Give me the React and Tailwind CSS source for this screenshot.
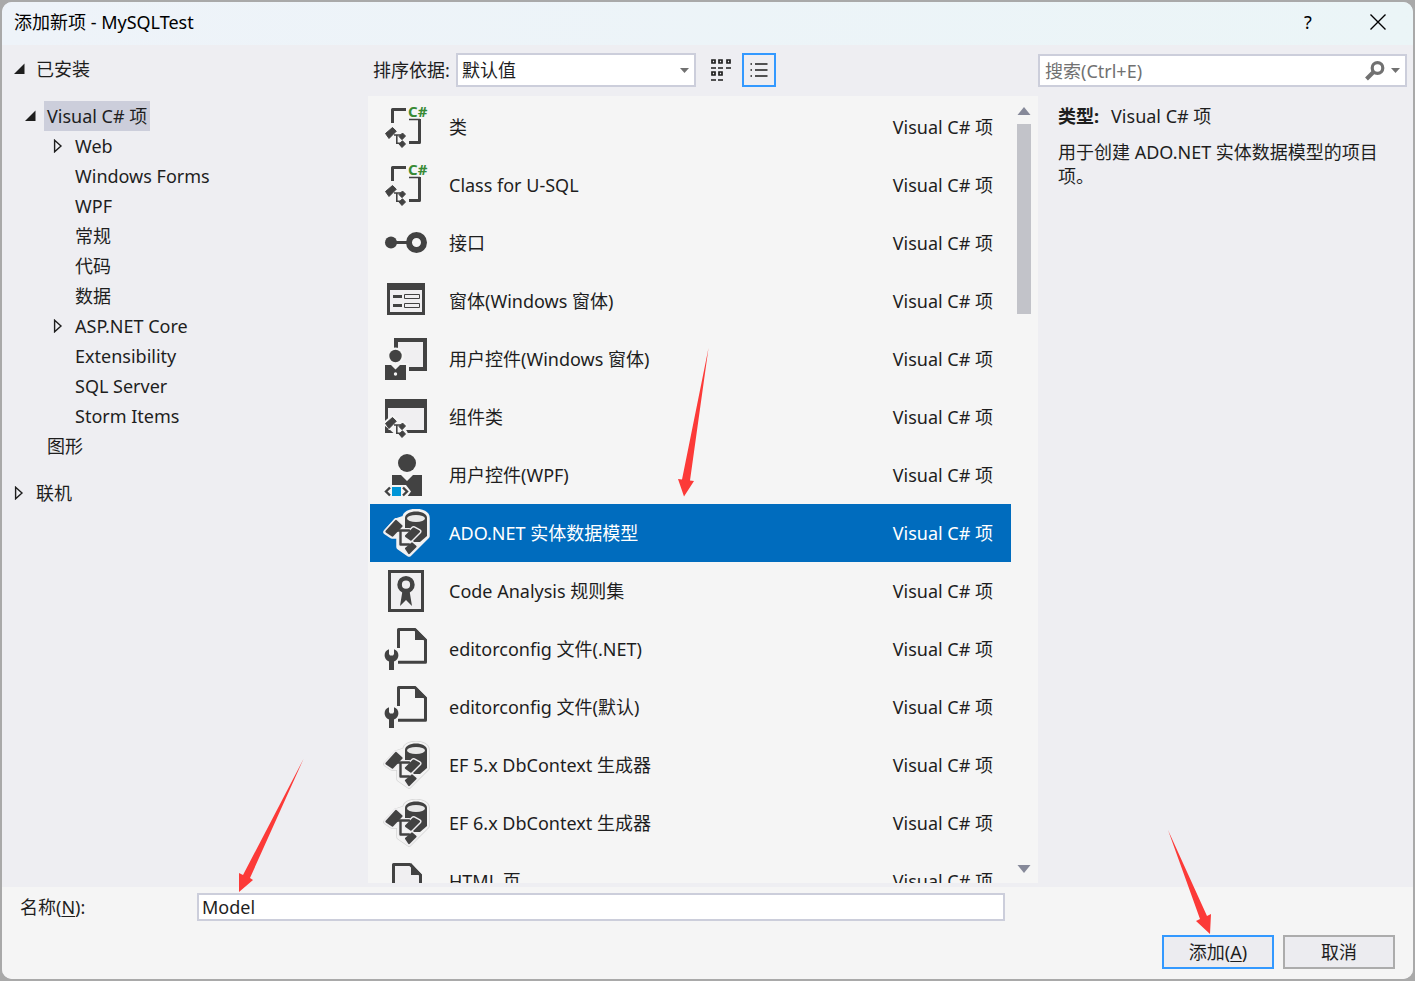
import React, { useState } from 'react';

const DARK = '#424242';
const LIGHT = '#f5f5f5';

const TREE = [
  { name: 'Visual C# 项', level: 1, arrow: 'open' },
  { name: 'Web', level: 2, arrow: 'closed' },
  { name: 'Windows Forms', level: 2 },
  { name: 'WPF', level: 2 },
  { name: '常规', level: 2 },
  { name: '代码', level: 2 },
  { name: '数据', level: 2 },
  { name: 'ASP.NET Core', level: 2, arrow: 'closed' },
  { name: 'Extensibility', level: 2 },
  { name: 'SQL Server', level: 2 },
  { name: 'Storm Items', level: 2 },
  { name: '图形', level: 1 }
];

const TEMPLATES = [
  { name: '类', icon: 'class' },
  { name: 'Class for U-SQL', icon: 'class' },
  { name: '接口', icon: 'interface' },
  { name: '窗体(Windows 窗体)', icon: 'form' },
  { name: '用户控件(Windows 窗体)', icon: 'userControl' },
  { name: '组件类', icon: 'component' },
  { name: '用户控件(WPF)', icon: 'wpf' },
  { name: 'ADO.NET 实体数据模型', icon: 'entity' },
  { name: 'Code Analysis 规则集', icon: 'ruleset' },
  { name: 'editorconfig 文件(.NET)', icon: 'config' },
  { name: 'editorconfig 文件(默认)', icon: 'config' },
  { name: 'EF 5.x DbContext 生成器', icon: 'entity' },
  { name: 'EF 6.x DbContext 生成器', icon: 'entity' },
  { name: 'HTML 页', icon: 'page' }
];

/* Iconos de las plantillas */

const Nodes = () => (
  <>
    <path
      d="M3.5 30.5 10.5 24.5 14.3 28.2 7 35.5ZM17 33.5 20.5 30 23.5 33 20 36.7ZM17 41 20.5 37.8 23.5 41 20 44.5Z"
      fill={DARK}
      stroke={DARK}
      strokeLinejoin="round"
    />
    <path d="M12 32H19M14.8 32V40.2H18" fill="none" stroke={DARK} strokeWidth="1.6" />
  </>
);

const ClassIcon = () => (
  <>
    <path d="M10.5 20V6.5H24M37.5 16V39.5H27" fill="none" stroke={DARK} strokeWidth="3" strokeLinejoin="round" />
    <path d="M27 16.5H38" stroke={DARK} strokeWidth="1.5" />
    <text x="26" y="13.5" fontSize="15" fontWeight="700" fill="#388a34">C#</text>
    <Nodes />
  </>
);

const InterfaceIcon = () => (
  <>
    <circle cx="9" cy="23.5" r="6" fill={DARK} />
    <path d="M14 23.5H25" stroke={DARK} strokeWidth="3" />
    <circle cx="34.5" cy="23.5" r="7.5" fill="none" stroke={DARK} strokeWidth="6" />
  </>
);

const FormIcon = () => (
  <>
    <path d="M5 6H43V38H5Z" fill={DARK} />
    <path d="M8 13H40V35H8Z" fill="#f0eff1" />
    <path d="M11 18H20V21H11ZM11 27H20V30H11Z" fill={DARK} />
    <path d="M22.5 17.5H37.5V21.5H22.5ZM22.5 26.5H37.5V30.5H22.5Z" fill="none" stroke={DARK} />
  </>
);

const UserControlIcon = () => (
  <>
    <path d="M14 5H43V34H14Z" fill="#f0eff1" stroke={DARK} strokeWidth="4" />
    <circle cx="13.5" cy="21" r="8.5" fill={LIGHT} />
    <path d="M1 28H27V46H1Z" fill={LIGHT} />
    <circle cx="13.5" cy="21" r="6.2" fill={DARK} />
    <path d="M3 30H9L13.5 34.5 18 30H24V45H3Z" fill={DARK} />
    <circle cx="13.5" cy="39" r="1.7" fill={LIGHT} />
  </>
);

const ComponentIcon = () => (
  <>
    <path d="M3 6H45V40H3Z" fill={DARK} />
    <path d="M6 15H42V37H6Z" fill="#f0eff1" />
    <path
      d="M3 30.5 10.5 24 14.5 28 20.5 29.5 24 33 22 37 24 41 20 45 14.5 40 10 36Z"
      fill={LIGHT}
      stroke={LIGHT}
      strokeWidth="4"
      strokeLinejoin="round"
    />
    <path d="M3 36V40H10L6 36Z" fill={DARK} />
    <Nodes />
  </>
);

const WpfIcon = () => (
  <>
    <circle cx="25" cy="12" r="9" fill={DARK} />
    <path d="M10 24H19L25 30 31 24H40V45H10Z" fill={DARK} />
    <path d="M8 34H24L29 40.5 25 46H8Z" fill={LIGHT} />
    <path d="M10 36H19V45H10Z" fill="#0095d7" />
    <path d="M8 36.5 4 40.5 8 44.5M21 36.5 25 40.5 21 44.5" fill="none" stroke={DARK} strokeWidth="2.4" />
  </>
);

const ENTITY_NODES = 'M4.5 22.5 14 12 19.5 17 10.5 26.5ZM24 27 31.5 19.5 37 22.5 29 30.5ZM24 39.5 30 34.5 33.5 37.5 27 44Z';
const ENTITY_LINKS = 'M14 21.5H27M18.5 21.5V35.5H27';
const ENTITY_DRUM = 'M23 9C23 5 28 2.5 34 2.5S45 5 45 9V27L38 33H30L23 20Z';
const ENTITY_BACK = 'M4 23 14 12 23 9 36 4 45 27 27 45 17 38V27H10Z';

const EntityIcon = ({ selected }) => (
  <g strokeLinejoin="round" strokeLinecap="round">
    <path
      d={ENTITY_DRUM + ENTITY_NODES + ENTITY_BACK}
      fill={selected ? '#f0eff1' : '#d6d6d6'}
      stroke={selected ? '#f0eff1' : '#d6d6d6'}
      strokeWidth="5.5"
    />
    <path d={ENTITY_DRUM + ENTITY_NODES + ENTITY_BACK} fill="#f3f3f3" stroke="#f3f3f3" strokeWidth="4" />
    <path d={ENTITY_DRUM} fill={DARK} />
    <ellipse cx="34" cy="9.5" rx="9" ry="3.4" fill="#e8e8e8" />
    <path d={ENTITY_NODES} fill="#f0eff1" stroke="#f0eff1" strokeWidth="5" />
    <path d={ENTITY_LINKS} fill="none" stroke="#f0eff1" strokeWidth="5" />
    <path d={ENTITY_NODES} fill={DARK} stroke={DARK} strokeWidth="2.2" />
    <path d={ENTITY_LINKS} fill="none" stroke={DARK} strokeWidth="2.4" />
  </g>
);

const RulesetIcon = () => (
  <>
    <path d="M7.5 4.5H40.5V43.5H7.5Z" fill="#f0eff1" stroke={DARK} strokeWidth="3" />
    <path d="M20.3 25H27.7L30 39 24 33 18 39Z" fill={DARK} />
    <circle cx="24" cy="17.7" r="6.4" fill="#f0eff1" stroke={DARK} strokeWidth="4.6" />
  </>
);

const ConfigIcon = () => (
  <>
    <path d="M16.5 23V4.5H33L43.5 15V37.2H16" fill="none" stroke={DARK} strokeWidth="3" strokeLinejoin="round" />
    <path d="M33 3V15H45Z" fill={DARK} />
    <circle cx="9.5" cy="30.5" r="8.5" fill={LIGHT} />
    <path d="M7 24.2V29L8 30.5H11L12 29V24.2A6.5 6.5 0 0 1 12 36.5V45H7V36.5A6.5 6.5 0 0 1 7 24.2Z" fill={DARK} />
  </>
);

const PageIcon = () => (
  <>
    <path d="M11.5 43V7.5H28L38.5 18V43Z" fill="#f0eff1" stroke={DARK} strokeWidth="3" strokeLinejoin="round" />
    <path d="M29 6V18H40Z" fill={DARK} />
  </>
);

const ICONS = {
  class: ClassIcon,
  interface: InterfaceIcon,
  form: FormIcon,
  userControl: UserControlIcon,
  component: ComponentIcon,
  wpf: WpfIcon,
  entity: EntityIcon,
  ruleset: RulesetIcon,
  config: ConfigIcon,
  page: PageIcon
};

const TreeArrow = ({ type }) => (
  <svg className="h-3.5 w-3.5 shrink-0" viewBox="0 0 14 14" aria-hidden="true">
    {type === 'open' && <path d="M12.5 1.5V12H2Z" fill="#1e1e1e" />}
    {type === 'closed' && <path d="M3.6 1.2 10 7 3.6 12.8Z" fill="none" stroke="#1e1e1e" strokeWidth="1.4" />}
  </svg>
);

const Tree = ({ current, onSelect }) => (
  <nav className="flex w-[366px] shrink-0 flex-col gap-[17px] pt-[9px]">
    <button className="flex h-[30px] items-center gap-2.5 pl-2.5 text-left">
      <TreeArrow type="open" />
      已安装
    </button>
    <ul>
      {TREE.map(node => (
        <li key={node.name} className={node.level === 1 ? 'flex h-[30px] items-center pl-[21px]' : 'flex h-[30px] items-center pl-[49px]'}>
          <TreeArrow type={node.arrow} />
          <button
            onClick={() => onSelect(node.name)}
            className={`ml-[7px] h-[30px] px-[3px] whitespace-nowrap ${current === node.name ? 'bg-[#cccedb]' : ''}`}
          >
            {node.name}
          </button>
        </li>
      ))}
    </ul>
    <button className="flex h-[30px] items-center gap-2.5 pl-2.5 text-left">
      <TreeArrow type="closed" />
      联机
    </button>
  </nav>
);

const Toolbar = () => (
  <div className="flex h-[51px] items-center pb-0.5 pl-[5px]">
    <label htmlFor="orden" className="w-[83px] whitespace-nowrap">排序依据:</label>
    <div className="relative w-[240px]">
      <select id="orden" className="block h-[34px] w-full appearance-none border-2 border-[#cccedb] bg-white px-1 outline-none">
        <option>默认值</option>
        <option>名称升序</option>
        <option>名称降序</option>
      </select>
      <svg className="pointer-events-none absolute top-[15px] right-[7px] h-[5px] w-[9px]" viewBox="0 0 9 5" aria-hidden="true">
        <path d="M0 0H9L4.5 5Z" fill="#717171" />
      </svg>
    </div>
    <button aria-label="中等图标" className="ml-2 flex h-[34px] w-[34px] items-center justify-center">
      <svg width="22" height="22" viewBox="0 0 22 22" fill="none" stroke="#1e1e1e">
        <path d="M2 1H5V4H2ZM9 1H12V4H9ZM17 1H20V4H17ZM2 13H5V16H2ZM9 13H12V16H9Z" strokeWidth="1.7" />
        <path d="M1 9H6M8 9H13M16 9H21M1 21H6M8 21H13" strokeWidth="1.4" />
      </svg>
    </button>
    <button aria-label="小图标" className="ml-1 flex h-[34px] w-[34px] items-center justify-center border-2 border-[#3399ff]">
      <svg width="18" height="16" viewBox="0 0 18 16" stroke="#1e1e1e" strokeWidth="1.4">
        <path d="M0.5 2H2M5 2H17.5M0.5 8H2M5 8H17.5M0.5 14H2M5 14H17.5" />
      </svg>
    </button>
  </div>
);

const ScrollBar = () => (
  <div className="flex w-7 shrink-0 flex-col items-center pt-[11px] pb-2.5">
    <button aria-label="向上滚动">
      <svg className="block" width="14" height="8" viewBox="0 0 14 8"><path d="M0.5 8 7 0 13.5 8Z" fill="#868999" /></svg>
    </button>
    <div className="mt-[9px] h-[190px] w-[14px] bg-[#c2c3c9]" />
    <button aria-label="向下滚动" className="mt-auto">
      <svg className="block" width="14" height="8" viewBox="0 0 14 8"><path d="M0.5 0H13.5L7 8Z" fill="#868999" /></svg>
    </button>
  </div>
);

const TemplateRow = ({ item, selected, onSelect }) => {
  const Icon = ICONS[item.icon];
  return (
    <li className="relative">
      <button
        onClick={onSelect}
        className={`flex h-[58px] w-full items-center pr-[18px] pl-3 text-left ${selected ? 'bg-[#006cbe] text-white' : ''}`}
      >
        <svg className="h-12 w-12 shrink-0" viewBox="0 0 48 48" aria-hidden="true">
          <Icon selected={selected} />
        </svg>
        <span className="ml-[19px] flex-1">{item.name}</span>
        <span>Visual C# 项</span>
      </button>
      {item.name.startsWith('ADO.NET') && (
        <svg className="pointer-events-none absolute bottom-[65px] left-[308px]" width="31" height="149" viewBox="0 0 31 149" aria-hidden="true">
          <path d="M30.5 0 12 132.5 16 133 6 148.5 0 131 4 131.5Z" fill="#fc3a38" />
        </svg>
      )}
    </li>
  );
};

const TitleBar = () => (
  <header className="flex h-[43px] shrink-0 items-center bg-gradient-to-r from-[#eef3f9] to-[#ebf5f7] pb-[3px] pl-3 text-black">
    <h1 className="flex-1">添加新项 - MySQLTest</h1>
    <button aria-label="帮助" className="w-[70px]">?</button>
    <button aria-label="关闭" className="flex w-[70px] items-center justify-center">
      <svg width="16" height="16" viewBox="0 0 16 16" stroke="#000" strokeWidth="1.4">
        <path d="M0.5 0.5 15.5 15.5M15.5 0.5 0.5 15.5" />
      </svg>
    </button>
  </header>
);

const Details = () => (
  <aside className="flex w-[375px] shrink-0 flex-col pr-[6px]">
    <div className="mt-[9px] flex h-[33px] items-center border-2 border-[#cccedb] bg-white pr-[5px]">
      <input
        type="search"
        aria-label="搜索"
        placeholder="搜索(Ctrl+E)"
        className="min-w-0 flex-1 px-[5px] outline-none placeholder:text-[#717171]"
      />
      <svg width="20" height="20" viewBox="0 0 20 20" fill="none" stroke="#717171" aria-hidden="true">
        <circle cx="12.5" cy="7" r="5.3" strokeWidth="3.2" />
        <path d="M8.5 11 1.5 18" strokeWidth="4" />
      </svg>
      <svg className="ml-1.5" width="9" height="5" viewBox="0 0 9 5" aria-hidden="true">
        <path d="M0 0H9L4.5 5Z" fill="#717171" />
      </svg>
    </div>
    <div className="pt-[17px] pr-3 pl-5 leading-6">
      <p><b className="mr-3">类型:</b>Visual C# 项</p>
      <p className="mt-3">用于创建 ADO.NET 实体数据模型的项目项。</p>
    </div>
  </aside>
);

const Footer = ({ name, onName }) => (
  <footer className="shrink-0 bg-[#f5f5f5] pt-1.5 pb-2.5">
    <div className="flex items-center pl-[18px]">
      <label htmlFor="nombre" className="w-[177px]">名称(<u className="underline-offset-2">N</u>):</label>
      <div className="relative mr-[408px] flex-1">
        <input
          id="nombre"
          type="text"
          value={name}
          onChange={e => onName(e.target.value)}
          className="block h-[28px] w-full border-2 border-[#cccedb] bg-white px-[3px] outline-none"
        />
        <svg className="pointer-events-none absolute bottom-[29px] left-[42px]" width="65" height="133" viewBox="0 0 65 133" aria-hidden="true">
          <path d="M64.5 0 11 119 14 121 0 133V114L4 116Z" fill="#fc3a38" />
        </svg>
      </div>
    </div>
    <div className="mt-[14px] flex justify-end gap-[9px] pr-[18px]">
      <div className="relative">
        <button className="h-[34px] w-28 border-2 border-[#3399ff] bg-[#ececf0]">添加(<u className="underline-offset-2">A</u>)</button>
        <svg className="pointer-events-none absolute bottom-[35px] left-1.5" width="44" height="104" viewBox="0 0 44 104" aria-hidden="true">
          <path d="M0 0 39 86 43 84 42 104 28 91 32 89Z" fill="#fc3a38" />
        </svg>
      </div>
      <button className="h-[34px] w-28 border-2 border-[#acacac] bg-[#ececf0]">取消</button>
    </div>
  </footer>
);

const App = () => {
  const [category, setCategory] = useState('Visual C# 项');
  const [template, setTemplate] = useState(7);
  const [name, setName] = useState('Model');

  return (
    <div className="h-screen bg-[#a9a9a9] p-0.5 font-['Noto_Sans','Noto_Sans_CJK_SC',sans-serif] text-[18px] leading-6 text-[#1e1e1e]">
      <div className="flex h-full flex-col overflow-hidden rounded-[10px] bg-[#eeeef2]">
        <TitleBar />
        <main className="flex min-h-0 flex-1 pb-1">
          <Tree current={category} onSelect={setCategory} />
          <section className="flex min-w-0 flex-1 flex-col">
            <Toolbar />
            <div className="flex min-h-0 flex-1 bg-[#f5f5f5]">
              <ul className="-mr-px min-w-0 flex-1 overflow-hidden pt-0.5 pl-0.5 pr-0">
                {TEMPLATES.map((t, i) => (
                  <TemplateRow key={t.name} item={t} selected={i === template} onSelect={() => setTemplate(i)} />
                ))}
              </ul>
              <ScrollBar />
            </div>
          </section>
          <Details />
        </main>
        <Footer name={name} onName={setName} />
      </div>
    </div>
  );
};

export default App;
